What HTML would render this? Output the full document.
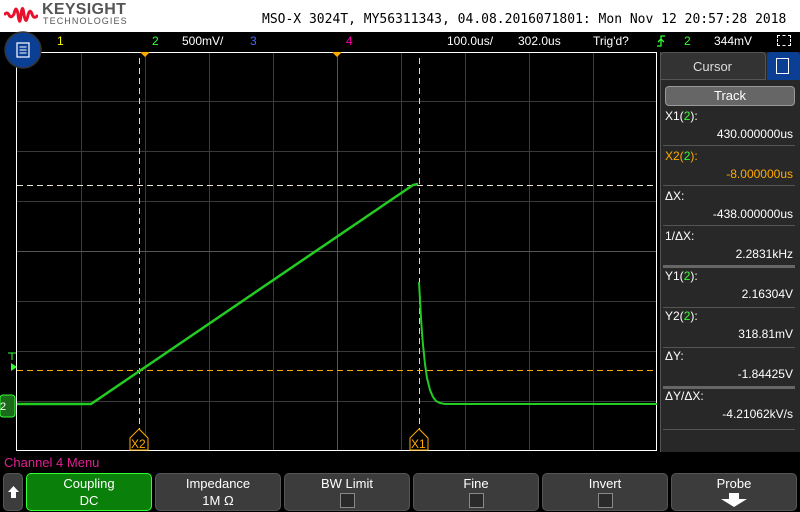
<!DOCTYPE html>
<html><head><meta charset="utf-8"><style>
body{margin:0;width:800px;height:512px;background:#000;overflow:hidden;font-family:"Liberation Sans",sans-serif;position:relative}
.a{position:absolute;white-space:nowrap}
.hdr{left:0;top:0;width:800px;height:32px;background:#fff}
.mono{font-family:"DejaVu Sans Mono","Liberation Mono",monospace}
.bt{position:absolute;top:473px;height:38px;width:124px;background:#3c3c3c;border:1px solid #555;border-radius:5px;box-sizing:border-box;color:#fff;font-size:13px;text-align:center}
.bt .l1{position:absolute;top:2px;left:0;right:0}
.bt .l2{position:absolute;top:19px;left:0;right:0}
.cb{display:inline-block;width:13px;height:13px;background:#2a2a2a;border:1px solid #888}
.pl{position:absolute;left:665px;color:#fff;font-size:12px}
.pv{position:absolute;right:7px;color:#fff;font-size:12px;text-align:right}
.sep{position:absolute;left:663px;width:132px;height:1px;background:#555}
</style></head><body>
<div class="a hdr"></div>
<svg class="a" style="left:4px;top:2px" width="34" height="26" viewBox="0 0 34 26"><path d="M0 13 Q3 9 5 13 T10 12 Q12 2 14 12 Q15.5 26 17 13 Q18.5 0 20 13 Q22 24 24 13 Q26 6 28 12 T34 13" stroke="#e8102a" stroke-width="3" fill="none"/></svg>
<div class="a" style="left:42px;top:1px;font-size:16px;font-weight:bold;color:#555;letter-spacing:0.3px">KEYSIGHT</div>
<div class="a" style="left:43px;top:16px;font-size:9px;color:#555;letter-spacing:1.1px">TECHNOLOGIES</div>
<div class="a mono" style="left:262px;top:12px;font-size:13px;color:#000">MSO-X 3024T, MY56311343, 04.08.2016071801: Mon Nov 12 20:57:28 2018</div>
<!-- status bar -->
<div class="a" style="left:57px;top:34px;color:#ff0;font-size:12px">1</div>
<div class="a" style="left:152px;top:34px;color:#3f3;font-size:12px">2</div>
<div class="a" style="left:182px;top:34px;color:#fff;font-size:12px">500mV/</div>
<div class="a" style="left:250px;top:34px;color:#46f;font-size:12px">3</div>
<div class="a" style="left:346px;top:34px;color:#f0a;font-size:12px">4</div>
<div class="a" style="left:447px;top:34px;color:#fff;font-size:12px">100.0us/</div>
<div class="a" style="left:518px;top:34px;color:#fff;font-size:12px">302.0us</div>
<div class="a" style="left:593px;top:34px;color:#fff;font-size:12px">Trig'd?</div>
<svg class="a" style="left:656px;top:35px" width="10" height="12"><path d="M1 11h4V1h4M2 7l3-3 3 3" stroke="#3f3" fill="none" stroke-width="1.3"/></svg>
<div class="a" style="left:684px;top:34px;color:#3f3;font-size:12px">2</div>
<div class="a" style="left:714px;top:34px;color:#fff;font-size:12px">344mV</div>
<div class="a" style="left:777px;top:35px;width:12px;height:9px;border:1px dashed #fff"></div>
<svg class="a" style="left:0;top:0" width="800" height="512">
<g stroke="#3a3a3a" stroke-width="1">
<path d="M81.5 52V451M145.5 52V451M209.5 52V451M273.5 52V451M337.5 52V451M401.5 52V451M465.5 52V451M529.5 52V451M593.5 52V451"/>
<path d="M17 101.5H657M17 151.5H657M17 201.5H657M17 301.5H657M17 351.5H657M17 401.5H657"/>
</g>
<path d="M17 251.5H657M337.5 52V451" stroke="#555"/>
<rect x="16.5" y="52.5" width="640" height="398" fill="none" stroke="#fff"/>
<g stroke-width="1" stroke-dasharray="6,4">
<path d="M139.5 58V440M419.5 58V440" stroke="#f4d6a0"/>
<path d="M17 185.5H657" stroke="#e8e0d0"/>
<path d="M17 370.5H657" stroke="#fa0"/>
</g>
<path d="M140 52l5 5 5-5z M332 52l5 5 5-5z" fill="#fa0"/>
<path d="M130 438l9-9 9 9v12h-18z M410 438l9-9 9 9v12h-18z" fill="#000" stroke="#fa0"/>
<text x="131" y="448" fill="#fa0" font-size="12" font-family="Liberation Sans">X2</text>
<text x="411" y="448" fill="#fa0" font-size="12" font-family="Liberation Sans">X1</text>
<polyline points="17,404 91,404 413,185 418,184" fill="none" stroke="#2c2" stroke-width="2.5"/>
<polyline points="419,282 420,300 421,318 422,333 423,345 425,364 427,378 430,390 433,397 436,401 440,403 445,404 657,404" fill="none" stroke="#2c2" stroke-width="2"/>
<path d="M8 353h8M12 353v7" stroke="#3f3"/>
<path d="M11 363l6 4-6 4z" fill="#3f3"/>
<rect x="0" y="395" width="15" height="22" rx="3" fill="#1a6a1a" stroke="#3f3"/>
<text x="0" y="410" fill="#fff" font-size="11" font-family="Liberation Sans">2</text>
<circle cx="23" cy="50" r="18" fill="#0a3f94" stroke="#333" stroke-width="1.5"/>
<rect x="17" y="43" width="12" height="14" fill="none" stroke="#fff" stroke-width="1.2"/>
<path d="M19.5 47h7M19.5 50h7M19.5 53h7" stroke="#fff"/>
</svg>
<!-- right panel -->
<div class="a" style="left:660px;top:52px;width:140px;height:400px;background:#282828;border-left:1px solid #555;box-sizing:border-box"></div>
<div class="a" style="left:660px;top:52px;width:106px;height:28px;background:#333;border-radius:4px 4px 0 0;border:1px solid #555;box-sizing:border-box"></div>
<div class="a" style="left:693px;top:59px;color:#ddd;font-size:13px">Cursor</div>
<div class="a" style="left:767px;top:52px;width:33px;height:28px;background:#0a3f94;border-radius:4px 4px 0 0"></div>
<div class="a" style="left:776px;top:58px;width:11px;height:14px;border:1px solid #fff"></div>
<div class="a" style="left:665px;top:86px;width:130px;height:20px;background:#666;border:1px solid #999;border-radius:4px;box-sizing:border-box;color:#fff;font-size:13px;text-align:center;line-height:18px">Track</div>
<div class="pl" style="top:109px">X1(<span style="color:#3f3">2</span>):</div><div class="pv" style="top:127px">430.000000us</div><div class="sep" style="top:145px"></div>
<div class="pl" style="top:149px;color:#fa0">X2(<span style="color:#3f3">2</span>):</div><div class="pv" style="top:167px;color:#fa0">-8.000000us</div><div class="sep" style="top:185px"></div>
<div class="pl" style="top:189px">ΔX:</div><div class="pv" style="top:207px">-438.000000us</div><div class="sep" style="top:225px"></div>
<div class="pl" style="top:229px">1/ΔX:</div><div class="pv" style="top:247px">2.2831kHz</div><div class="sep" style="top:265px;height:3px;background:#666"></div>
<div class="pl" style="top:269px">Y1(<span style="color:#3f3">2</span>):</div><div class="pv" style="top:287px">2.16304V</div><div class="sep" style="top:307px"></div>
<div class="pl" style="top:309px">Y2(<span style="color:#3f3">2</span>):</div><div class="pv" style="top:327px">318.81mV</div><div class="sep" style="top:347px"></div>
<div class="pl" style="top:349px">ΔY:</div><div class="pv" style="top:367px">-1.84425V</div><div class="sep" style="top:386px;height:3px;background:#666"></div>
<div class="pl" style="top:389px">ΔY/ΔX:</div><div class="pv" style="top:407px">-4.21062kV/s</div><div class="sep" style="top:429px"></div>
<!-- bottom -->
<div class="a" style="left:4px;top:455px;color:#e0208f;font-size:13px">Channel 4 Menu</div>
<div class="bt" style="left:3px;width:20px"><svg style="position:absolute;left:4px;top:12px" width="11" height="12"><path d="M5.5 0L11 6H8v6H3V6H0z" fill="#fff"/></svg></div>
<div class="bt" style="left:26px;width:126px;background:#0a800a;border-color:#3f3"><div class="l1">Coupling</div><div class="l2">DC</div></div>
<div class="bt" style="left:155px;width:126px"><div class="l1">Impedance</div><div class="l2">1M Ω</div></div>
<div class="bt" style="left:284px;width:126px"><div class="l1">BW Limit</div><div class="l2"><span class="cb"></span></div></div>
<div class="bt" style="left:413px;width:126px"><div class="l1">Fine</div><div class="l2"><span class="cb"></span></div></div>
<div class="bt" style="left:542px;width:126px"><div class="l1">Invert</div><div class="l2"><span class="cb"></span></div></div>
<div class="bt" style="left:671px;width:126px"><div class="l1">Probe</div><div class="l2"><svg width="26" height="14"><path d="M8 0h10v6h8l-13 8-13-8h8z" fill="#fff"/></svg></div></div>
</body></html>
